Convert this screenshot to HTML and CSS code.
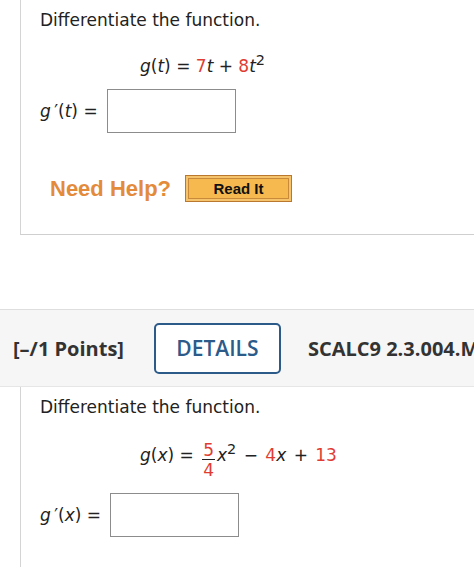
FILE: index.html
```html
<!DOCTYPE html>
<html lang="en">
<head>
    <meta charset="UTF-8">
    <meta name="viewport" content="width=device-width, initial-scale=1.0">
    <title>Differentiate the function</title>
    <link rel="stylesheet" href="styles.css">
</head>
<body>
    <div class="question first">
        <p class="prompt">Differentiate the function.</p>
        <p class="equation">
            <i>g</i>(<i>t</i>) = <span class="red">7</span><i>t</i> + <span class="red">8</span><i>t</i><sup>2</sup>
        </p>
        <div class="answer">
            <span class="label"><i>g</i>&thinsp;′(<i>t</i>) =</span>
            <span class="box"></span>
        </div>
        <div class="help">
            <span class="need-help">Need Help?</span>
            <button class="read-it">Read It</button>
        </div>
    </div>

    <div class="header-bar">
        <span class="points">[–/1 Points]</span>
        <button class="details">DETAILS</button>
        <span class="code">SCALC9 2.3.004.MI.</span>
    </div>

    <div class="question second">
        <p class="prompt">Differentiate the function.</p>
        <p class="equation">
            <i>g</i>(<i>x</i>) =
            <span class="frac"><span class="red num">5</span><span class="red den">4</span></span><i>x</i><sup>2</sup> <span class="op">−</span> <span class="red">4</span><i>x</i> <span class="op">+</span> <span class="red">13</span>
        </p>
        <div class="answer">
            <span class="label"><i>g</i>&thinsp;′(<i>x</i>) =</span>
            <span class="box"></span>
        </div>
    </div>
</body>
</html>
```

FILE: styles.css
```css
body {
    margin: 0;
    font-family: "DejaVu Sans", Verdana, sans-serif;
    color: #222;
    background-color: #fff;
    overflow: hidden;
}
p {
    margin: 0;
}
.question {
    margin-left: 20px;
    border-left: 1px solid #d4d4d4;
    padding-left: 19px;
    font-size: 17px;
}
.question.first {
    height: 235px;
    border-bottom: 1px solid #cfcfcf;
    box-sizing: border-box;
}
.question.second {
    height: 181px;
}
.prompt {
    padding-top: 11px;
    line-height: 19px;
}
.first .equation {
    margin-top: 26px;
}
.second .equation {
    margin-top: 28px;
}
.equation {
    padding-left: 100px;
    line-height: 20px;
}
i {
    font-style: oblique;
}
.red {
    color: #e03c31;
}
.op {
    margin: 0 2px;
}
sup {
    font-size: 0.85em;
    line-height: 0;
    vertical-align: 0.5em;
}
/* fraction: numerator sits a little above the baseline, kept out of the line box */
.frac {
    display: inline-flex;
    flex-direction: column;
    align-items: center;
    vertical-align: 5px;
    line-height: 20px;
    margin: -5px 2px -16px 3px;
}
.frac .num {
    border-bottom: 1px solid #222;
    padding: 0 1px;
    line-height: 18px;
}
.answer {
    display: flex;
    align-items: center;
    gap: 9px;
}
.first .answer {
    margin-top: 13px;
}
.second .answer {
    margin-top: 28px;
}
.box {
    display: inline-block;
    width: 127px;
    height: 42px;
    border: 1px solid #8c8c8c;
}
.help {
    display: flex;
    align-items: center;
    margin-top: 42px;
    padding-left: 10px;
    gap: 14px;
}
.need-help {
    font-family: "Liberation Sans", Arial, sans-serif;
    font-weight: bold;
    font-size: 22px;
    color: #e38b3b;
}
.read-it {
    font-family: "Liberation Sans", Arial, sans-serif;
    font-weight: bold;
    font-size: 15px;
    color: #111;
    width: 107px;
    height: 27px;
    background-color: #f6b950;
    border: 1px solid #b9782e;
    box-shadow: inset 0 0 0 2px #f5c36b, inset 0 0 0 3px #c98a3a;
    padding: 0;
}

.header-bar {
    margin-top: 74px;
    height: 76px;
    background-color: #f6f6f6;
    border-top: 1px solid #dedede;
    border-bottom: 1px solid #e6e6e6;
    display: flex;
    align-items: center;
    padding-left: 13px;
    white-space: nowrap;
    overflow: hidden;
    font-family: "Open Sans", sans-serif;
}
.points {
    font-weight: bold;
    font-size: 20px;
    color: #333;
}
.details {
    margin-left: 30px;
    flex-shrink: 0;
    width: 127px;
    height: 51px;
    background-color: #fff;
    border: 2px solid #2c5b8a;
    border-radius: 5px;
    color: #2c5b8a;
    font-family: "Open Sans", sans-serif;
    font-weight: 600;
    font-size: 21px;
    padding: 0;
}
.code {
    margin-left: 27px;
    font-weight: bold;
    font-size: 20px;
    color: #333;
}
```
